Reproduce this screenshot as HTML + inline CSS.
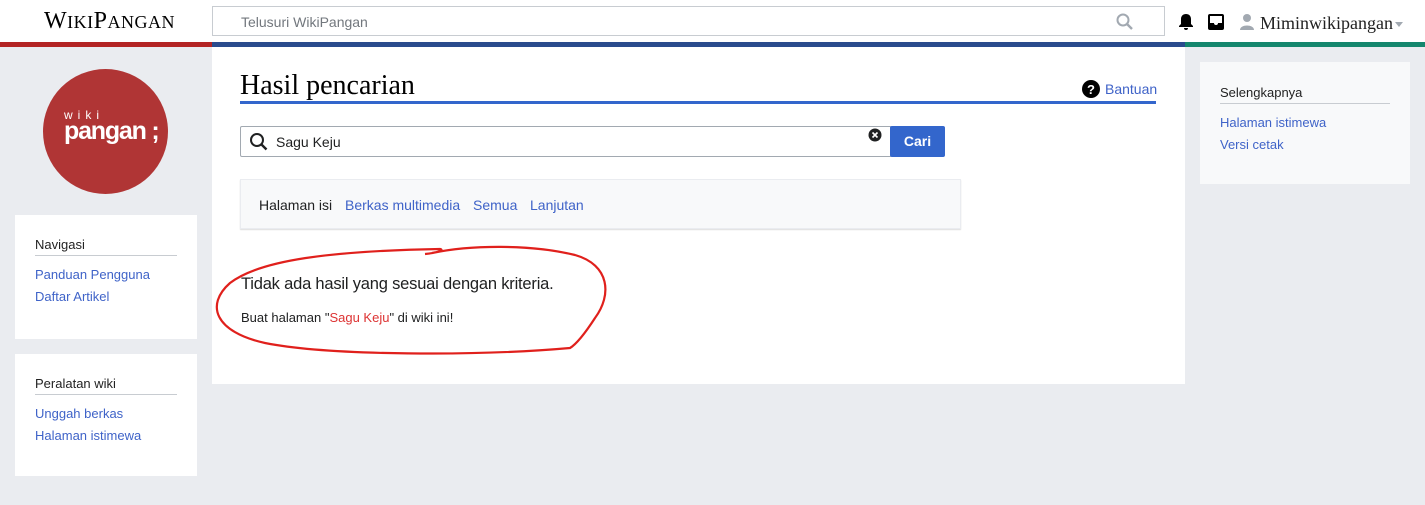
<!DOCTYPE html>
<html><head><meta charset="utf-8"><style>
*{margin:0;padding:0;box-sizing:border-box}
body{width:1425px;height:505px;background:#eaecf0;font-family:"Liberation Sans",sans-serif;position:relative;overflow:hidden}
.abs{position:absolute}
a{color:#3f63c8;text-decoration:none}
.head{left:0;top:0;width:1425px;height:43px;background:#fff}
.bar{top:42px;height:5px}
.panel{background:#fff}
.side a{display:block;font-size:13px;color:#3f63c8;line-height:22px}
.side .t{font-size:13px;color:#222;border-bottom:1px solid #c8ccd1;padding-bottom:3px;margin-bottom:8px}
</style></head><body>
<div class="abs head"></div>
<div class="abs" style="left:44px;top:8px;font-family:'Liberation Serif',serif;font-size:24px;color:#000;letter-spacing:0.5px">W<span style="font-size:18px">IKI</span>P<span style="font-size:18px">ANGAN</span></div>
<div class="abs" style="left:212px;top:6px;width:953px;height:30px;border:1px solid #c8ccd1;background:#fff"></div>
<div class="abs" style="left:241px;top:14px;font-size:14px;color:#72777d">Telusuri WikiPangan</div>
<svg class="abs" style="left:1115px;top:12px" width="20" height="20" viewBox="0 0 20 20"><circle cx="8" cy="8" r="5.5" fill="none" stroke="#a2a9b1" stroke-width="2"/><path d="M12 12l5 5" stroke="#a2a9b1" stroke-width="2.4"/></svg>
<svg class="abs" style="left:1178px;top:13px" width="16" height="18" viewBox="0 0 16 18"><path d="M8 1c-3 0-5 2-5 5v5l-2 2v1h14v-1l-2-2V6c0-3-2-5-5-5z M6 15h4a2 2 0 0 1-4 0z" fill="#000"/></svg>
<svg class="abs" style="left:1207px;top:13px" width="18" height="18" viewBox="0 0 18 18"><rect x="1" y="1" width="16" height="16" rx="2" fill="#000"/><path d="M3 3h12v7h-4a2 2 0 0 1-4 0H3z" fill="#fff"/></svg>
<svg class="abs" style="left:1239px;top:13px" width="16" height="18" viewBox="0 0 16 18"><circle cx="8" cy="5" r="4" fill="#a2a9b1"/><path d="M1 17c0-6 14-6 14 0z" fill="#a2a9b1"/></svg>
<div class="abs" style="left:1260px;top:13px;font-family:'Liberation Serif',serif;font-size:18px;color:#222">Miminwikipangan</div>
<div class="abs" style="left:1395px;top:22px;border:4px solid transparent;border-top:5px solid #a2a9b1"></div>
<div class="abs bar" style="left:0;width:212px;background:#b32424"></div>
<div class="abs bar" style="left:212px;width:973px;background:#2a4b8d"></div>
<div class="abs bar" style="left:1185px;width:240px;background:#14866d"></div>

<div class="abs" style="left:43px;top:69px;width:125px;height:125px;border-radius:50%;background:#b03535"></div>
<div class="abs" style="left:64px;top:108px;color:#fff;font-size:12px;letter-spacing:5px">wiki</div>
<div class="abs" style="left:64px;top:117px;color:#fff;font-size:25px;font-weight:bold;letter-spacing:-1.2px">pangan ;</div>

<div class="abs panel side" style="left:15px;top:215px;width:182px;height:124px;padding:22px 20px">
<div class="t">Navigasi</div><a>Panduan Pengguna</a><a>Daftar Artikel</a></div>
<div class="abs panel side" style="left:15px;top:354px;width:182px;height:122px;padding:22px 20px">
<div class="t">Peralatan wiki</div><a>Unggah berkas</a><a>Halaman istimewa</a></div>

<div class="abs panel" style="left:212px;top:47px;width:973px;height:337px"></div>
<div class="abs" style="left:240px;top:70px;font-family:'Liberation Serif',serif;font-size:28px;color:#000">Hasil pencarian</div>
<div class="abs" style="left:240px;top:101px;width:916px;height:3px;background:#3366cc"></div>
<svg class="abs" style="left:1082px;top:80px" width="18" height="18" viewBox="0 0 18 18"><circle cx="9" cy="9" r="9" fill="#000"/><text x="9" y="14" font-size="13" font-weight="bold" fill="#fff" text-anchor="middle" font-family="Liberation Sans">?</text></svg>
<div class="abs" style="left:1105px;top:81px;font-size:14px;color:#3f63c8">Bantuan</div>

<div class="abs" style="left:240px;top:126px;width:652px;height:31px;border:1px solid #a2a9b1;border-radius:2px;background:#fff"></div>
<svg class="abs" style="left:249px;top:132px" width="20" height="20" viewBox="0 0 20 20"><circle cx="8" cy="8" r="6" fill="none" stroke="#202122" stroke-width="2"/><path d="M12.5 12.5l5 5" stroke="#202122" stroke-width="2.4"/></svg>
<div class="abs" style="left:276px;top:134px;font-size:14px;color:#202122">Sagu Keju</div>
<svg class="abs" style="left:868px;top:128px" width="14" height="14" viewBox="0 0 14 14"><circle cx="7" cy="7" r="6.5" fill="#202122"/><path d="M4.5 4.5l5 5M9.5 4.5l-5 5" stroke="#fff" stroke-width="1.6"/></svg>
<div class="abs" style="left:890px;top:126px;width:55px;height:31px;background:#3366cc;border-radius:2px;color:#fff;font-weight:bold;font-size:14px;text-align:center;line-height:31px">Cari</div>

<div class="abs" style="left:240px;top:179px;width:721px;height:50px;background:#f8f9fa;border:1px solid #eaecf0;box-shadow:0 1px 1px #ddd"></div>
<div class="abs" style="left:259px;top:197px;font-size:14px;color:#202122">Halaman isi</div>
<a class="abs" style="left:345px;top:197px;font-size:14px">Berkas multimedia</a>
<a class="abs" style="left:473px;top:197px;font-size:14px">Semua</a>
<a class="abs" style="left:530px;top:197px;font-size:14px">Lanjutan</a>

<div class="abs" style="left:241px;top:275px;font-size:16.5px;color:#202122;letter-spacing:-0.2px">Tidak ada hasil yang sesuai dengan kriteria.</div>
<div class="abs" style="left:241px;top:310px;font-size:13px;color:#202122">Buat halaman "<span style="color:#d33">Sagu Keju</span>" di wiki ini!</div>
<svg class="abs" style="left:0;top:0" width="1425" height="505"><path d="M432 253 C470 245 530 244 575 255 C610 265 612 295 595 318 C582 338 575 345 570 348 C480 356 330 356 265 343 C215 332 205 305 230 283 C260 260 330 251 440 249 C445 250 436 253 425 254" fill="none" stroke="#e0201c" stroke-width="2.2"/></svg>

<div class="abs panel side" style="left:1200px;top:62px;width:210px;height:122px;padding:23px 20px;background:#f8f9fa">
<div class="t" style="width:170px">Selengkapnya</div><a>Halaman istimewa</a><a>Versi cetak</a></div>
</body></html>
